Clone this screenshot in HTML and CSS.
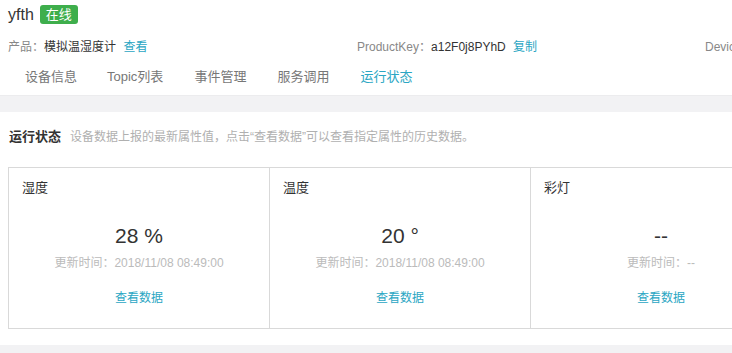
FILE: index.html
```html
<!DOCTYPE html>
<html>
<head>
    <title>设备详情</title>
    <meta charset="UTF-8">
    <link rel="stylesheet" href="styles.css">
</head>
<body>
    <div class="header">
        <div class="title-row">
            <span class="device-name">yfth</span>
            <span class="badge">在线</span>
        </div>
        <div class="info-row">
            <div class="info-item info-product">
                <span class="info-label">产品：</span><span class="info-value">模拟温湿度计</span>
                <a class="link">查看</a>
            </div>
            <div class="info-item info-key">
                <span class="info-label">ProductKey：</span><span class="info-value">a12F0j8PYhD</span>
                <a class="link">复制</a>
            </div>
            <div class="info-item info-secret">
                <span class="info-label">DeviceSecret：</span>
            </div>
        </div>
        <div class="tabs">
            <span class="tab">设备信息</span>
            <span class="tab">Topic列表</span>
            <span class="tab">事件管理</span>
            <span class="tab">服务调用</span>
            <span class="tab active">运行状态</span>
        </div>
    </div>
    <div class="band"></div>
    <div class="panel">
        <div class="panel-head">
            <span class="panel-title">运行状态</span>
            <span class="panel-desc">设备数据上报的最新属性值，点击“查看数据”可以查看指定属性的历史数据。</span>
        </div>
        <div class="cards">
            <div class="card">
                <div class="card-title">湿度</div>
                <div class="card-value">28 %</div>
                <div class="card-time">更新时间：2018/11/08 08:49:00</div>
                <a class="link card-link">查看数据</a>
            </div>
            <div class="card">
                <div class="card-title">温度</div>
                <div class="card-value">20 °</div>
                <div class="card-time">更新时间：2018/11/08 08:49:00</div>
                <a class="link card-link">查看数据</a>
            </div>
            <div class="card">
                <div class="card-title">彩灯</div>
                <div class="card-value">--</div>
                <div class="card-time">更新时间：--</div>
                <a class="link card-link">查看数据</a>
            </div>
        </div>
    </div>
    <div class="band band-bottom"></div>
</body>
</html>
```

FILE: styles.css
```css
/* 设备详情 */
body {
    margin: 0;
    font-family: "Liberation Sans", Arial, "Noto Sans CJK SC", sans-serif;
    color: #333;
    background-color: #fff;
    overflow: hidden;
    width: 732px;
}
.header {
    padding: 0 0 0 8px;
    height: 95px;
    white-space: nowrap;
}
.title-row {
    display: flex;
    align-items: center;
    height: 29px;
}
.device-name {
    font-size: 16px;
    color: #333;
}
.badge {
    margin-left: 6px;
    background-color: #3eae4c;
    color: #fff;
    font-size: 13px;
    line-height: 19px;
    padding: 0 6px;
    border-radius: 3px;
}
.info-row {
    display: flex;
    align-items: center;
    height: 32px;
    font-size: 12px;
}
.info-item {
    flex: none;
}
.info-product {
    width: 349px;
}
.info-key {
    width: 348px;
}
.info-label {
    color: #888;
}
.info-value {
    color: #333;
}
.link {
    color: #2aa6c3;
    margin-left: 4px;
    cursor: pointer;
}
.tabs {
    display: flex;
    align-items: flex-start;
    height: 29px;
    padding: 5px 0 0 17px;
    font-size: 13px;
}
.tab {
    color: #777;
    margin-right: 31px;
}
.tab:first-child {
    margin-right: 30px;
}
.tab.active {
    color: #2aa6c3;
}
.band {
    height: 16px;
    background-color: #f2f2f4;
    border-top: 1px solid #ececee;
}
.band-bottom {
    height: 10px;
    border-top: none;
}
.panel {
    padding: 0 0 16px 8px;
    white-space: nowrap;
}
.panel-head {
    height: 41px;
    padding: 14px 0 0 1px;
    display: flex;
    align-items: flex-start;
}
.panel-title {
    font-size: 13px;
    font-weight: bold;
    color: #333;
}
.panel-desc {
    margin: 1px 0 0 9px;
    font-size: 12px;
    color: #b0b0b0;
}
.cards {
    display: flex;
    border: 1px solid #d9d9d9;
    border-right: none;
    width: 800px;
}
.card {
    flex: none;
    width: 260px;
    height: 160px;
    border-right: 1px solid #d9d9d9;
    display: flex;
    flex-direction: column;
    align-items: center;
}
.card-title {
    align-self: flex-start;
    margin: 9px 0 0 13px;
    font-size: 13px;
    color: #333;
}
.card-value {
    margin-top: 28px;
    font-size: 21px;
    color: #333;
}
.card-time {
    margin-top: 5px;
    font-size: 12px;
    color: #bbb;
}
.card-link {
    margin: 18px 0 0;
    font-size: 12px;
}
```
